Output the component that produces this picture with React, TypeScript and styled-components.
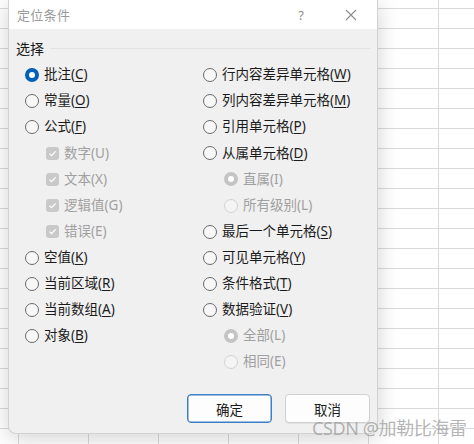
import React from 'react'
import styled, { createGlobalStyle, css } from 'styled-components'

const GlobalStyle = createGlobalStyle`
  html, body {
    margin: 0;
    padding: 0;
  }
  body {
    width: 474px;
    height: 444px;
    overflow: hidden;
    background-color: #ffffff;
    background-image:
      linear-gradient(to right, #dadada 1px, transparent 1px),
      linear-gradient(to bottom, #dadada 1px, transparent 1px);
    background-size: 70px 20px;
    background-position: 18px 8px;
    font-family: "Noto Sans", "Noto Sans CJK SC", sans-serif;
  }
`

const Page = styled.div`
  position: relative;
  width: 474px;
  height: 444px;
  padding-left: 8px;
  box-sizing: border-box;
`

const Dialog = styled.div`
  width: 370px;
  height: 434px;
  display: flex;
  flex-direction: column;
  background: #f0f0f0;
  border: 1px solid rgba(0, 0, 0, 0.12);
  border-top: none;
  border-radius: 0 0 8px 8px;
  box-shadow: 0 4px 22px rgba(0, 0, 0, 0.18);
  box-sizing: border-box;
  overflow: hidden;
`

const TitleBar = styled.div`
  height: 29px;
  flex-shrink: 0;
  display: flex;
  align-items: center;
  background: #ffffff;
  padding-left: 8px;
  padding-right: 6px;
`

const Title = styled.span`
  flex: 1;
  font-size: 13px;
  color: #9a9a9a;
  letter-spacing: 0.3px;
`

const TitleButton = styled.span<{ $space?: number }>`
  width: 40px;
  margin-right: ${p => p.$space ?? 0}px;
  display: flex;
  justify-content: center;
  align-items: center;
  font-size: 13px;
  color: #8c8c8c;
`

const Body = styled.div`
  flex: 1;
  display: flex;
  flex-direction: column;
  padding: 9px 7px 10px 6px;
`

const GroupHeader = styled.div`
  height: 20px;
  display: flex;
  align-items: center;
  gap: 6px;
  font-size: 14px;
  color: #1a1a1a;
  &::after {
    content: '';
    flex: 1;
    height: 1px;
    background: #e2e2e2;
  }
`

const Columns = styled.div`
  margin-top: 4px;
  padding-left: 10px;
  display: grid;
  grid-template-columns: 178px 1fr;
`

const Column = styled.div`
  display: flex;
  flex-direction: column;
`

const Row = styled.div<{ $indent?: boolean }>`
  height: 26.1px;
  display: flex;
  align-items: center;
  gap: 5px;
  padding-left: ${p => (p.$indent ? 21 : 0)}px;
`

const Label = styled.span<{ $disabled?: boolean }>`
  font-size: 13.5px;
  line-height: 1;
  white-space: nowrap;
  color: ${p => (p.$disabled ? '#a0a0a0' : '#1b1b1b')};
  u {
    text-underline-offset: 2px;
  }
`

const Radio = styled.span<{ $checked?: boolean; $disabled?: boolean }>`
  width: 14px;
  height: 14px;
  border-radius: 50%;
  box-sizing: border-box;
  flex-shrink: 0;
  border: 1px solid #6a6a6a;
  background: #f7f7f7;
  ${p =>
    p.$disabled &&
    css`
      border-color: #d2d2d2;
      background: #f4f4f4;
    `}
  ${p =>
    p.$checked &&
    css`
      border: 4.5px solid ${p.$disabled ? '#c4c4c4' : '#005fb8'};
      background: #ffffff;
    `}
`

const Check = styled.span`
  width: 13px;
  height: 13px;
  border-radius: 3px;
  flex-shrink: 0;
  background: #c9c9c9;
  display: flex;
  align-items: center;
  justify-content: center;
`

const Buttons = styled.div`
  margin-top: auto;
  display: flex;
  justify-content: flex-end;
  gap: 13px;
`

const Button = styled.button<{ $primary?: boolean }>`
  width: 85px;
  height: 29px;
  border-radius: 4px;
  background: #fdfdfd;
  border: 1px solid ${p => (p.$primary ? '#3d7fc4' : '#d0d0d0')};
  box-shadow: ${p => (p.$primary ? 'inset 0 0 0 0.5px #3d7fc4' : '0 1px 0 rgba(0,0,0,0.06)')};
  font-family: inherit;
  font-size: 13.5px;
  color: #1b1b1b;
  padding: 0;
`

const Watermark = styled.div`
  position: absolute;
  left: 312px;
  top: 417px;
  font-size: 18px;
  line-height: 22px;
  color: rgba(150, 150, 150, 0.7);
  white-space: nowrap;
  letter-spacing: -0.4px;
`

type Item = {
  text: string
  key: string
  kind?: 'radio' | 'check'
  checked?: boolean
  disabled?: boolean
  indent?: boolean
}

const left: Item[] = [
  { text: '批注', key: 'C', checked: true },
  { text: '常量', key: 'O' },
  { text: '公式', key: 'F' },
  { text: '数字', key: 'U', kind: 'check', checked: true, disabled: true, indent: true },
  { text: '文本', key: 'X', kind: 'check', checked: true, disabled: true, indent: true },
  { text: '逻辑值', key: 'G', kind: 'check', checked: true, disabled: true, indent: true },
  { text: '错误', key: 'E', kind: 'check', checked: true, disabled: true, indent: true },
  { text: '空值', key: 'K' },
  { text: '当前区域', key: 'R' },
  { text: '当前数组', key: 'A' },
  { text: '对象', key: 'B' },
]

const right: Item[] = [
  { text: '行内容差异单元格', key: 'W' },
  { text: '列内容差异单元格', key: 'M' },
  { text: '引用单元格', key: 'P' },
  { text: '从属单元格', key: 'D' },
  { text: '直属', key: 'I', checked: true, disabled: true, indent: true },
  { text: '所有级别', key: 'L', disabled: true, indent: true },
  { text: '最后一个单元格', key: 'S' },
  { text: '可见单元格', key: 'Y' },
  { text: '条件格式', key: 'T' },
  { text: '数据验证', key: 'V' },
  { text: '全部', key: 'L', checked: true, disabled: true, indent: true },
  { text: '相同', key: 'E', disabled: true, indent: true },
]

const Option = ({ item }: { item: Item }) => (
  <Row $indent={item.indent}>
    {item.kind === 'check' ? (
      <Check>
        <svg width="9" height="9" viewBox="0 0 9 9">
          <path d="M1.5 4.6 L3.6 6.6 L7.6 2.4" fill="none" stroke="#fff" strokeWidth="1.3" />
        </svg>
      </Check>
    ) : (
      <Radio $checked={item.checked} $disabled={item.disabled} />
    )}
    <Label $disabled={item.disabled}>
      {item.text}(
      {item.disabled ? item.key : <u>{item.key}</u>})
    </Label>
  </Row>
)

const App = () => {
  return (
    <Page>
      <GlobalStyle />
      <Dialog>
        <TitleBar>
          <Title>定位条件</Title>
          <TitleButton $space={10}>?</TitleButton>
          <TitleButton>
            <svg width="12" height="12" viewBox="0 0 12 12">
              <path d="M1 1 L11 11 M11 1 L1 11" stroke="#8c8c8c" strokeWidth="1.1" />
            </svg>
          </TitleButton>
        </TitleBar>
        <Body>
          <GroupHeader>
            <span style={{ paddingLeft: 1 }}>选择</span>
          </GroupHeader>
          <Columns>
            <Column>
              {left.map((it, i) => (
                <Option key={i} item={it} />
              ))}
            </Column>
            <Column>
              {right.map((it, i) => (
                <Option key={i} item={it} />
              ))}
            </Column>
          </Columns>
          <Buttons>
            <Button $primary>确定</Button>
            <Button>取消</Button>
          </Buttons>
        </Body>
      </Dialog>
      <Watermark>CSDN @加勒比海雷</Watermark>
    </Page>
  )
}

export default App
